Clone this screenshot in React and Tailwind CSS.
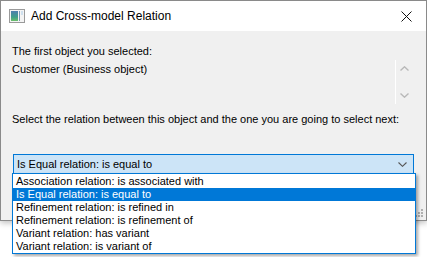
import React from "react";

const items = [
  "Association relation: is associated with",
  "Is Equal relation: is equal to",
  "Refinement relation: is refined in",
  "Refinement relation: is refinement of",
  "Variant relation: has variant",
  "Variant relation: is variant of",
];

const AppIcon = () => (
  <svg width="16" height="14" viewBox="0 0 16 14">
    <rect x="0.5" y="0.5" width="15" height="13" fill="#f4f4f4" stroke="#9a9a9a" />
    <defs>
      <linearGradient id="g" x1="0" y1="0" x2="0" y2="1">
        <stop offset="0" stopColor="#4f7fb0" />
        <stop offset="0.6" stopColor="#3f9f8a" />
        <stop offset="1" stopColor="#6cbf6a" />
      </linearGradient>
    </defs>
    <rect x="2" y="2" width="7" height="10" fill="url(#g)" />
    <rect x="10" y="2" width="1" height="10" fill="#7a9ab8" />
    <rect x="12" y="2" width="2" height="4" fill="#cfe0ee" />
  </svg>
);

export default function App() {
  return (
    <div
      className="w-[427px] h-[257px] bg-white relative overflow-hidden"
      style={{ fontFamily: '"Liberation Sans", Arial, sans-serif' }}
    >
      <div className="h-[221px] border border-[#8a8a8a] flex flex-col shadow-[0_2px_6px_rgba(0,0,0,0.25)]">
        {/* title bar */}
        <div className="h-[30px] bg-white flex items-center pl-[8px] pr-[14px] shrink-0">
          <AppIcon />
          <span className="ml-[6px] text-[12px] text-black">Add Cross-model Relation</span>
          <svg className="ml-auto" width="11" height="11" viewBox="0 0 11 11">
            <path d="M0.5 0.5 L10.5 10.5 M10.5 0.5 L0.5 10.5" stroke="#111" strokeWidth="1" />
          </svg>
        </div>

        {/* body */}
        <div className="flex-1 bg-[#f0f0f0] px-[11px] pt-[14px] text-[11px] text-black leading-[13px] relative">
          <div className="flex h-[68px]">
            <div className="flex-1">
              <div className="h-[18px]">The first object you selected:</div>
              <div>Customer (Business object)</div>
            </div>
            <div className="w-[17px] mt-[15px] h-[44px] border-l border-white flex flex-col items-center justify-between py-[6px] mr-[3px]">
              <svg width="9" height="5" viewBox="0 0 9 5">
                <path d="M0.5 4.5 L4.5 0.8 L8.5 4.5" stroke="#b8b8b8" strokeWidth="1.4" fill="none" />
              </svg>
              <svg width="9" height="5" viewBox="0 0 9 5">
                <path d="M0.5 0.5 L4.5 4.2 L8.5 0.5" stroke="#b8b8b8" strokeWidth="1.4" fill="none" />
              </svg>
            </div>
          </div>
          <div>
            Select the relation between this object and the one you are going to select next:
          </div>

          {/* combobox */}
          <div className="mt-[28px] mx-[1px] h-[21px] bg-[#cce4f7] border border-[#0078d7] flex items-center pl-[3px] pr-[6px]">
            <span>Is Equal relation: is equal to</span>
            <svg className="ml-auto" width="9" height="5" viewBox="0 0 9 5">
              <path d="M0.5 0.5 L4.5 4.3 L8.5 0.5" stroke="#555" strokeWidth="1.1" fill="none" />
            </svg>
          </div>

          {/* resize grip */}
          <div className="absolute right-[3px] bottom-[3px] grid grid-cols-3 gap-[1px]">
            {[0, 0, 1, 0, 1, 1, 1, 1, 1].map((v, i) => (
              <div key={i} className={v ? "w-[2px] h-[2px] bg-[#b0b0b0]" : "w-[2px] h-[2px]"} />
            ))}
          </div>
        </div>
      </div>

      {/* dropdown list */}
      <div className="absolute left-[12px] top-[173px] w-[404px] pt-[1px] bg-white border border-[#0078d7] text-[11px] leading-[13px] text-black shadow-[2px_2px_3px_rgba(0,0,0,0.35)]">
        {items.map((t, i) => (
          <div
            key={t}
            className={
              i === 1
                ? "h-[13px] pl-[3px] bg-[#0078d7] text-white"
                : "h-[13px] pl-[3px]"
            }
          >
            {t}
          </div>
        ))}
      </div>
    </div>
  );
}
